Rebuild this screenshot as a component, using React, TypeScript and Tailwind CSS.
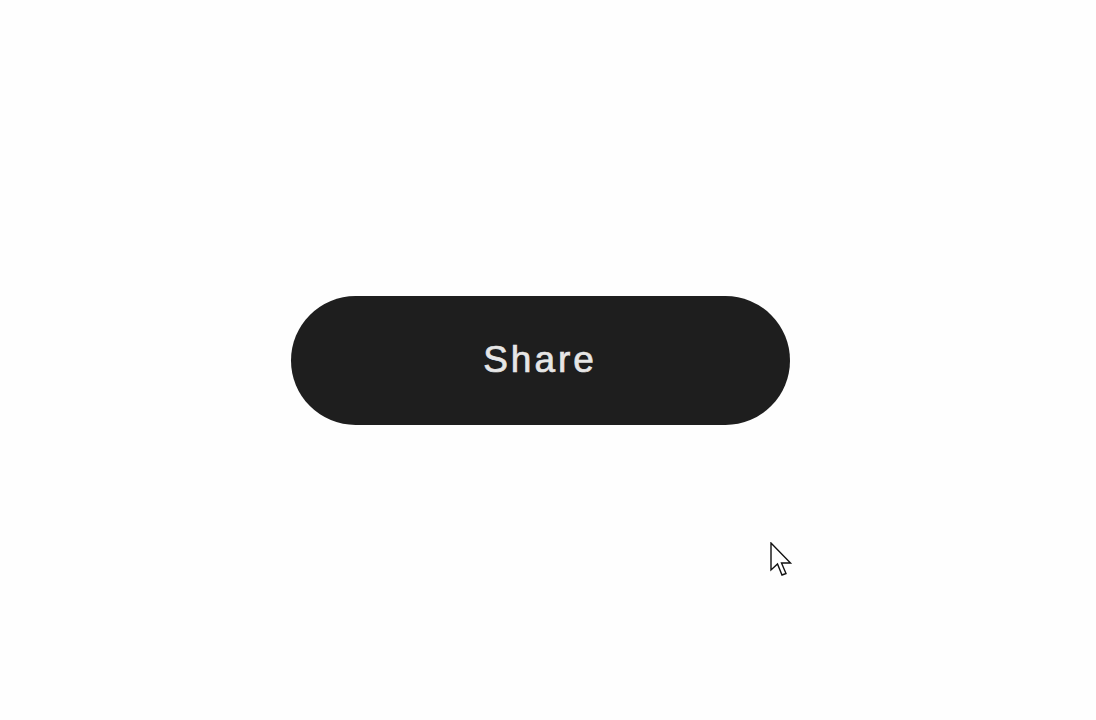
const Cursor: React.FC = () => (
  <svg
    className="absolute left-[769px] top-[542px]"
    width="26"
    height="38"
    viewBox="0 0 26 38"
  >
    <path
      d="M2 1 L2 28 L8.5 22 L13 33 L17 31.5 L12.5 21 L21.5 21 Z"
      fill="#ffffff"
      stroke="#111111"
      strokeWidth="1.4"
      strokeLinejoin="miter"
    />
  </svg>
);

export default function App() {
  return (
    <div className="relative h-[720px] w-full bg-[#fefefe] flex items-center justify-center pr-[15px]">
      <button
        className="w-[499px] h-[129px] rounded-full bg-[#1e1e1e] text-[#e6e6e6] text-[37px] tracking-[3px] pr-[1px] [-webkit-text-stroke:0.7px_#e6e6e6]"
        style={{ fontFamily: '"Liberation Sans", Arial, sans-serif' }}
      >
        Share
      </button>
      <Cursor />
    </div>
  );
}
